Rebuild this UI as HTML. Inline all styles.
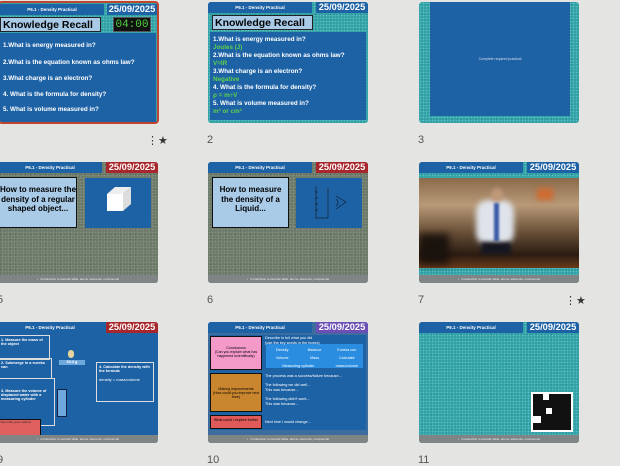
<!DOCTYPE html><html><head><style>
body{margin:0;width:620px;height:465px;background:#e4e4e2;position:relative;overflow:hidden;font-family:"Liberation Sans",sans-serif}
.s{position:absolute;width:160px;height:121px;border-radius:3px;overflow:hidden}
.a{position:absolute}
.teal{background:#32a2a6;background-image:radial-gradient(circle,rgba(140,215,218,.55) 0.6px,transparent 1px),radial-gradient(circle,rgba(20,130,135,.5) 0.6px,transparent 1px);background-size:3px 3px,5px 5px}
.grey{background:#6e7b6b;background-image:radial-gradient(circle,rgba(160,170,155,.5) 0.6px,transparent 1px),radial-gradient(circle,rgba(70,85,70,.5) 0.6px,transparent 1px);background-size:3px 3px,5px 5px}
.hd{position:absolute;left:0;top:0;width:100px;height:11px;background:#1e62a6;color:#fff;font-size:4.5px;font-weight:bold;text-align:center;line-height:11px}
.dt{position:absolute;left:108px;top:0;width:52px;height:11px;background:#1e62a6;color:#fff;font-size:9.3px;font-weight:bold;text-align:center;line-height:11px}
.red{background:#a8272c}.pur{background:#6b4fb5}
.ft{position:absolute;left:0;bottom:0;width:160px;height:8px;background:#7f8485;color:#eee;font-size:3px;text-align:center;line-height:8px}
.lb{position:absolute;font-size:11px;color:#555}
.q{font-size:6.3px;font-weight:bold;color:#fff;position:absolute;left:3px}
.g{color:#5fd14a}
.st{position:absolute;font-size:11px;color:#333}
</style></head><body>

<!-- slide 1 -->
<div class="s teal" style="left:-2px;top:1px;width:161px;height:123px;border:2px solid #c0442e;box-sizing:border-box;border-radius:4px">
<div class="hd" style="top:1px;width:104px">P6.1 - Density Practical</div>
<div class="dt" style="top:1px;left:107px;width:50px">25/09/2025</div>
<div class="a" style="left:0;top:14px;width:101px;height:15px;background:#a9cbe8;border:1px solid #222;box-sizing:border-box;font-size:10.5px;font-weight:bold;line-height:14px;padding-left:2px">Knowledge Recall</div>
<div class="a" style="left:113px;top:14px;width:38px;height:15px;background:#111;border:1px solid #555;box-sizing:border-box;color:#4fd43a;font-family:'Liberation Mono',monospace;font-size:11px;text-align:center;line-height:14px">04:00</div>
<div class="a" style="left:0;top:30px;width:156px;height:89px;background:#1e62a6">
<div class="q" style="top:9px">1.What is energy measured in?</div>
<div class="q" style="top:26px">2.What is the equation known as ohms law?</div>
<div class="q" style="top:42px">3.What charge is an electron?</div>
<div class="q" style="top:58px">4. What is the formula for density?</div>
<div class="q" style="top:73px">5. What is volume measured in?</div>
</div></div>
<div class="st" style="left:147px;top:134px">⋮★</div>

<!-- slide 2 -->
<div class="s teal" style="left:208px;top:2px">
<div class="hd" style="width:104px">P6.1 - Density Practical</div>
<div class="dt">25/09/2025</div>
<div class="a" style="left:4px;top:13px;width:101px;height:15px;background:#a9cbe8;border:1px solid #222;box-sizing:border-box;font-size:10.5px;font-weight:bold;line-height:14px;padding-left:2px">Knowledge Recall</div>
<div class="a" style="left:2px;top:30px;width:156px;height:88px;background:#1e62a6">
<div class="q" style="top:4px">1.What is energy measured in?</div>
<div class="q g" style="top:12px">Joules (J)</div>
<div class="q" style="top:20px">2.What is the equation known as ohms law?</div>
<div class="q g" style="top:28px">V=IR</div>
<div class="q" style="top:36px">3.What charge is an electron?</div>
<div class="q g" style="top:44px">Negative</div>
<div class="q" style="top:52px">4. What is the formula for density?</div>
<div class="q g" style="top:60px">ρ = m÷V</div>
<div class="q" style="top:68px">5. What is volume measured in?</div>
<div class="q g" style="top:76px">m³ or cm³</div>
</div></div>
<div class="lb" style="left:207px;top:134px">2</div>

<!-- slide 3 -->
<div class="s teal" style="left:419px;top:2px">
<div class="a" style="left:11px;top:0;width:140px;height:114px;background:#1e62a6;color:#dde;font-size:3.5px;text-align:center;line-height:114px">Complete required practical</div>
</div>
<div class="lb" style="left:418px;top:134px">3</div>

<!-- slide 5 -->
<div class="s grey" style="left:-2px;top:162px">
<div class="hd" style="width:104px">P6.1 - Density Practical</div>
<div class="dt red">25/09/2025</div>
<div class="a" style="left:1px;top:15px;width:78px;height:51px;background:#a9cbe8;border:1px solid #111;box-sizing:border-box;font-size:8px;font-weight:bold;text-align:center;padding-top:7px;line-height:9.5px">How to measure the density of a regular shaped object...</div>
<div class="a" style="left:87px;top:16px;width:66px;height:50px;background:#1e62a6">
<svg width="66" height="50"><polygon points="22,16 30,9 46,9 38,16" fill="#eee"/><polygon points="38,16 46,9 46,26 38,33" fill="#ddd"/><rect x="22" y="16" width="16" height="17" fill="#fff"/></svg></div>
<div class="ft">•&nbsp;&nbsp; Introduction to periodic table, atoms, elements, compounds</div>
</div>
<div class="lb" style="left:-3px;top:294px">5</div>

<!-- slide 6 -->
<div class="s grey" style="left:208px;top:162px">
<div class="hd" style="width:104px">P6.1 - Density Practical</div>
<div class="dt red">25/09/2025</div>
<div class="a" style="left:4px;top:15px;width:77px;height:51px;background:#a9cbe8;border:1px solid #111;box-sizing:border-box;font-size:8px;font-weight:bold;text-align:center;padding-top:7px;line-height:9.5px">How to measure the density of a Liquid...</div>
<div class="a" style="left:88px;top:16px;width:66px;height:50px;background:#1e62a6">
<svg width="66" height="50" stroke="#123" fill="none" stroke-width="0.7"><path d="M20 8V40H32M32 10V40M19 14h3M19 20h3M19 26h3M19 32h3"/><path d="M40 18L50 24L40 31M40 21q4 3 0 7"/></svg></div>
<div class="ft">•&nbsp;&nbsp; Introduction to periodic table, atoms, elements, compounds</div>
</div>
<div class="lb" style="left:207px;top:294px">6</div>

<!-- slide 7 -->
<div class="s teal" style="left:419px;top:162px">
<div class="hd" style="width:104px">P6.1 - Density Practical</div>
<div class="dt">25/09/2025</div>
<div class="a" style="left:0;top:16px;width:160px;height:90px;background:linear-gradient(180deg,#8a6a4a 0%,#b89a78 30%,#6a5038 60%,#2a1c12 85%,#6a3a1a 100%)">
<div class="a" style="left:57px;top:22px;width:38px;height:45px;background:#dfe4ec;border-radius:12px;filter:blur(3px)"></div>
<div class="a" style="left:72px;top:10px;width:12px;height:14px;background:#c0987a;border-radius:6px;filter:blur(2px)"></div>
<div class="a" style="left:75px;top:25px;width:5px;height:38px;background:#3a5aa8;filter:blur(1px)"></div>
<div class="a" style="left:62px;top:64px;width:30px;height:12px;background:#151520;filter:blur(2px)"></div>
<div class="a" style="left:0;top:56px;width:30px;height:30px;background:#1a120c;filter:blur(4px)"></div>
<div class="a" style="left:118px;top:10px;width:16px;height:12px;background:#d06a30;filter:blur(3px)"></div>
</div>
<div class="ft">•&nbsp;&nbsp; Introduction to periodic table, atoms, elements, compounds</div>
</div>
<div class="lb" style="left:418px;top:294px">7</div>
<div class="st" style="left:565px;top:294px">⋮★</div>

<!-- slide 9 -->
<div class="s" style="left:-2px;top:322px;background:#1e62a6">
<div class="hd" style="width:104px">P6.1 - Density Practical</div>
<div class="dt red">25/09/2025</div>
<div class="a" style="left:0;top:13px;width:160px;height:100px;background:#1e62a6;color:#fff;font-size:3.8px;font-weight:bold">
<div class="a" style="left:0;top:0;width:46px;height:19px;border:1px solid #ddd;padding:2px">1. Measure the mass of the object</div>
<div class="a" style="left:0;top:23px;width:48px;height:15px;border:1px solid #ddd;padding:2px">2. Submerge in a eureka can</div>
<div class="a" style="left:0;top:43px;width:51px;height:34px;border:1px solid #ddd;padding:2px;padding-top:10px">3. Measure the volume of displaced water with a measuring cylinder</div>
<div class="a" style="left:98px;top:27px;width:52px;height:34px;border:1px solid #ddd;padding:2px">4. Calculate the density with the formula<br><br><span style="font-weight:normal;font-size:4px">density = mass/volume</span></div>
<div class="a" style="left:61px;top:25px;width:26px;height:5px;background:#6fa8dc;text-align:center">60.3 g</div>
<div class="a" style="left:70px;top:15px;width:6px;height:8px;background:#e6d4a0;border-radius:3px"></div>
<div class="a" style="left:59px;top:54px;width:8px;height:26px;background:#6fa8dc;border:0.5px solid #124"></div>
</div>
<div class="a" style="left:0;top:97px;width:41px;height:16px;background:#e06060;border:1px solid #111;font-size:3px;color:#222">Then write your method</div>
<div class="ft">•&nbsp;&nbsp; Introduction to periodic table, atoms, elements, compounds</div>
</div>
<div class="lb" style="left:-3px;top:454px">9</div>

<!-- slide 10 -->
<div class="s" style="left:208px;top:322px;background:#3d6d9e">
<div class="hd" style="width:104px">P6.1 - Density Practical</div>
<div class="dt pur">25/09/2025</div>
<div class="a" style="left:2px;top:13px;width:156px;height:95px;background:#1e62a6"></div>
<div class="a" style="left:2px;top:14px;width:52px;height:34px;background:#f49ac9;border:1px solid #111;font-size:3.6px;text-align:center;padding-top:9px;box-sizing:border-box">Conclusions<br>(Can you explain what has happened scientifically)</div>
<div class="a" style="left:2px;top:51px;width:52px;height:39px;background:#c9862e;border:1px solid #111;font-size:3.6px;text-align:center;padding-top:13px;box-sizing:border-box">Making improvements<br>(How could you improve next time)</div>
<div class="a" style="left:2px;top:93px;width:52px;height:14px;background:#e05a5a;border:1px solid #111;font-size:3.6px;text-align:center;padding-top:2px;box-sizing:border-box">What could I explore further</div>
<div class="a" style="left:58px;top:22px;width:97px;height:24px;background:#2a8de0"></div>
<div class="a" style="left:57px;top:14px;width:100px;color:#fff;font-size:3.8px;line-height:4.5px">Describe in full what you did<br>(use the key words in the boxes)</div>
<div class="a" style="left:58px;top:24px;width:97px;color:#fff;font-size:3.8px;line-height:8px;display:grid;grid-template-columns:1fr 1fr 1fr;text-align:center"><span>Density</span><span>Balance</span><span>Eureka can</span><span>Volume</span><span>Mass</span><span>Calculate</span><span style="grid-column:1/3">Measuring cylinder</span><span>mass/volume</span></div>
<div class="a" style="left:57px;top:52px;width:100px;color:#fff;font-size:3.8px;line-height:4.6px">The process was a success/failure because...<br><br>The following we did well...<br>This was because...<br><br>The following didn't work...<br>This was because...</div>
<div class="a" style="left:57px;top:98px;color:#fff;font-size:3.8px">Next time I would change...</div>
<div class="ft">•&nbsp;&nbsp; Introduction to periodic table, atoms, elements, compounds</div>
</div>
<div class="lb" style="left:207px;top:454px">10</div>

<!-- slide 11 -->
<div class="s teal" style="left:419px;top:322px">
<div class="hd" style="width:104px">P6.1 - Density Practical</div>
<div class="dt">25/09/2025</div>
<div class="a" style="left:112px;top:70px;width:42px;height:40px;background:#fff"></div>
<div class="a" style="left:114px;top:72px;width:38px;height:36px;background:#111"></div>
<div class="a" style="left:124px;top:72px;width:6px;height:6px;background:#fff"></div>
<div class="a" style="left:127px;top:86px;width:6px;height:6px;background:#fff"></div>
<div class="a" style="left:114px;top:94px;width:8px;height:7px;background:#fff"></div>
<div class="ft">•&nbsp;&nbsp; Introduction to periodic table, atoms, elements, compounds</div>
</div>
<div class="lb" style="left:418px;top:454px">11</div>

</body></html>
